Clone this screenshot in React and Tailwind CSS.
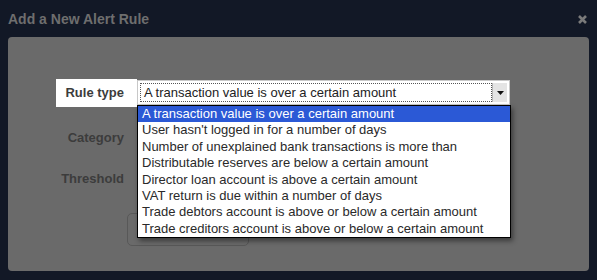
import React from "react";

const items = [
  "A transaction value is over a certain amount",
  "User hasn't logged in for a number of days",
  "Number of unexplained bank transactions is more than",
  "Distributable reserves are below a certain amount",
  "Director loan account is above a certain amount",
  "VAT return is due within a number of days",
  "Trade debtors account is above or below a certain amount",
  "Trade creditors account is above or below a certain amount",
];

export default function App() {
  return (
    <div
      className="relative w-[597px] h-[280px] overflow-hidden bg-[#121826]"
      style={{ fontFamily: '"Liberation Sans", Arial, sans-serif' }}
    >
      <div className="flex items-start justify-between h-[37px] pl-2 pr-[10px] pt-[11px]">
        <h1 className="text-[14px] font-bold text-[#6e6e6e] leading-[16px]">Add a New Alert Rule</h1>
        <svg width="9" height="9" viewBox="0 0 9 9" className="mt-[4px]">
          <path d="M1 1 L8 8 M8 1 L1 8" stroke="#7a7a7a" strokeWidth="2.6" strokeLinecap="butt" />
        </svg>
      </div>
      <div className="mx-2 h-[234px] bg-[#6a6a6a] rounded-[4px] pt-[42px] pl-[48px]">
        <div className="flex h-[28px]">
          <div className="w-[81px] bg-white flex items-center justify-end pr-[13px] text-[13px] font-bold text-[#3c3c3c]">
            Rule type
          </div>
          <div className="mt-[1px] w-[373px] h-[25px] bg-white border border-[#c8c8c8] flex items-stretch p-[2px] pr-[2px]">
            <div className="flex-1 border border-dotted border-[#555] flex items-center pl-[3px] text-[13px] text-[#222] leading-none">
              A transaction value is over a certain amount
            </div>
            <div className="w-[15px] bg-[#e4e4e4] border-l border-[#b5b5b5] flex items-center justify-center">
              <svg width="7" height="4" viewBox="0 0 7 4"><path d="M0 0 H7 L3.5 4 Z" fill="#111" /></svg>
            </div>
          </div>
        </div>
        <div className="flex h-[28px] mt-[17px]">
          <div className="w-[81px] flex items-center justify-end pr-[13px] text-[13px] font-bold text-[#3c3c3c]">
            Category
          </div>
        </div>
        <div className="flex h-[28px] mt-[13px]">
          <div className="w-[81px] flex items-center justify-end pr-[13px] text-[13px] font-bold text-[#3c3c3c]">
            Threshold
          </div>
        </div>
        <div className="ml-[71px] mt-[20px] w-[122px] h-[33px] border border-[#585858] rounded-[5px]"></div>
      </div>
      <div className="absolute left-[137px] top-[105px] w-[374px] bg-white border border-black shadow-[2px_3px_5px_rgba(0,0,0,0.45)]">
        {items.map((t, i) => (
          <div
            key={i}
            className={
              "h-[16.4px] leading-[16.4px] pl-[4px] text-[13px] whitespace-nowrap " +
              (i === 0 ? "bg-[#2b59d6] text-white" : "text-[#2a2a2a]")
            }
          >
            {t}
          </div>
        ))}
      </div>
    </div>
  );
}
